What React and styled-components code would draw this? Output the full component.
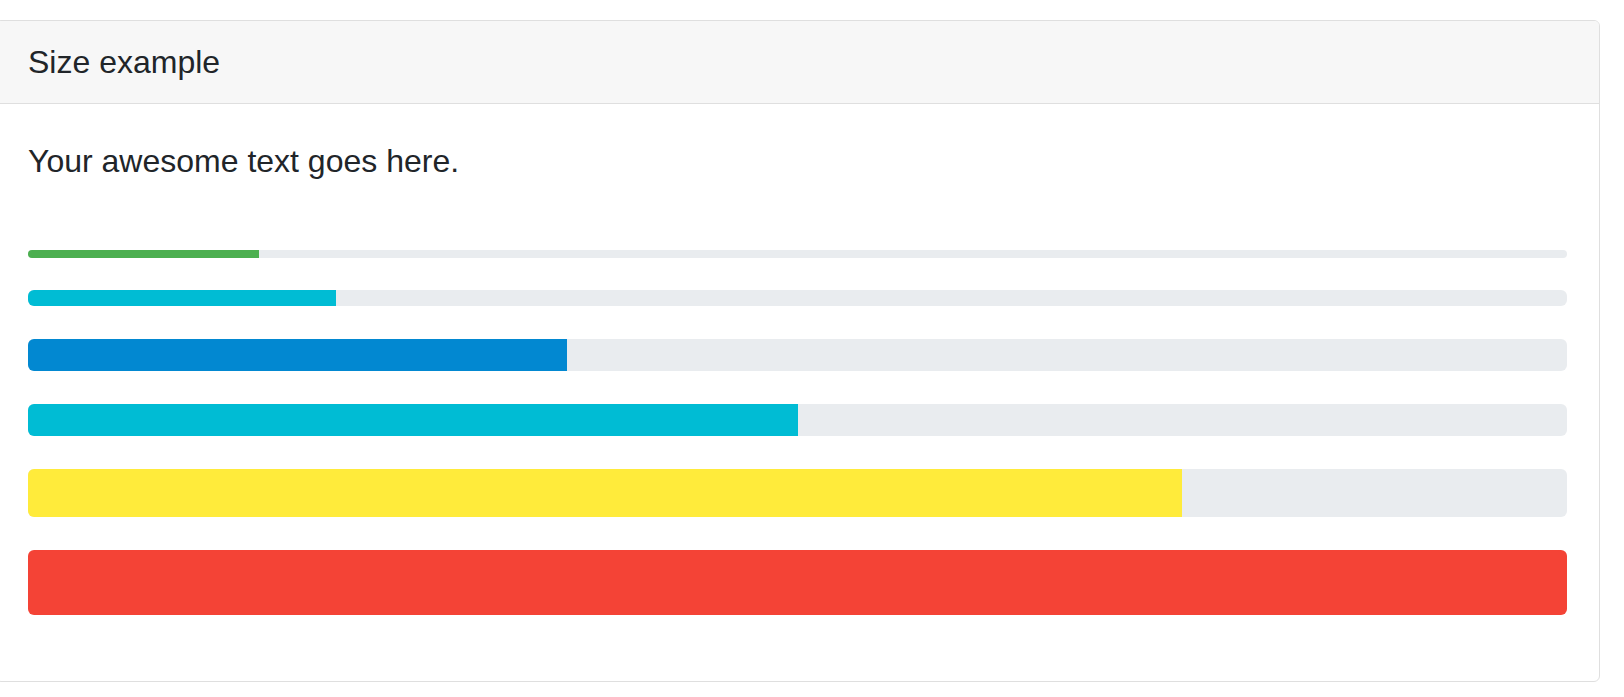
import React from "react";
import styled, { createGlobalStyle } from "styled-components";

const Global = createGlobalStyle`
  html, body { margin: 0; padding: 0; background: #fff; }
  body { font-family: "Liberation Sans", Arial, sans-serif; color: #212529; }
`;

const Card = styled.div`
  margin: 20px 24px 0 -5px;
  border: 1px solid #dfdfdf;
  border-radius: 6px;
  background: #fff;
  overflow: hidden;
`;

const Header = styled.div`
  background: #f7f7f7;
  border-bottom: 1px solid #dfdfdf;
  padding: 17px 32px;
  font-size: 32px;
  line-height: 48px;
`;

const Body = styled.div`
  padding: 32.5px 32px 66px;
`;

const Text = styled.p`
  margin: 0 0 65px;
  font-size: 32px;
  line-height: 48px;
`;

const Bars = styled.div`
  display: flex;
  flex-direction: column;
  gap: 32.5px;
`;

const Track = styled.div`
  height: ${(p) => p.$h}px;
  background: #e9ecef;
  border-radius: ${(p) => (p.$h < 10 ? 4 : 6)}px;
  overflow: hidden;
  display: flex;
`;

const Fill = styled.div`
  height: 100%;
  background: ${(p) => p.$color};
`;

const bars = [
  { h: 8, pct: 15, color: "#4caf50" },
  { h: 16, pct: 20, color: "#00bcd4" },
  { h: 32.5, pct: 35, color: "#0288d1" },
  { h: 32.5, pct: 50, color: "#00bcd4" },
  { h: 48.75, pct: 75, color: "#ffeb3b" },
  { h: 65, pct: 100, color: "#f44336" },
];

export default function App() {
  return (
    <>
      <Global />
      <Card>
        <Header>Size example</Header>
        <Body>
          <Text>Your awesome text goes here.</Text>
          <Bars>
            {bars.map((b, i) => (
              <Track key={i} $h={b.h}>
                <Fill $color={b.color} style={{ width: `${b.pct}%` }} />
              </Track>
            ))}
          </Bars>
        </Body>
      </Card>
    </>
  );
}
